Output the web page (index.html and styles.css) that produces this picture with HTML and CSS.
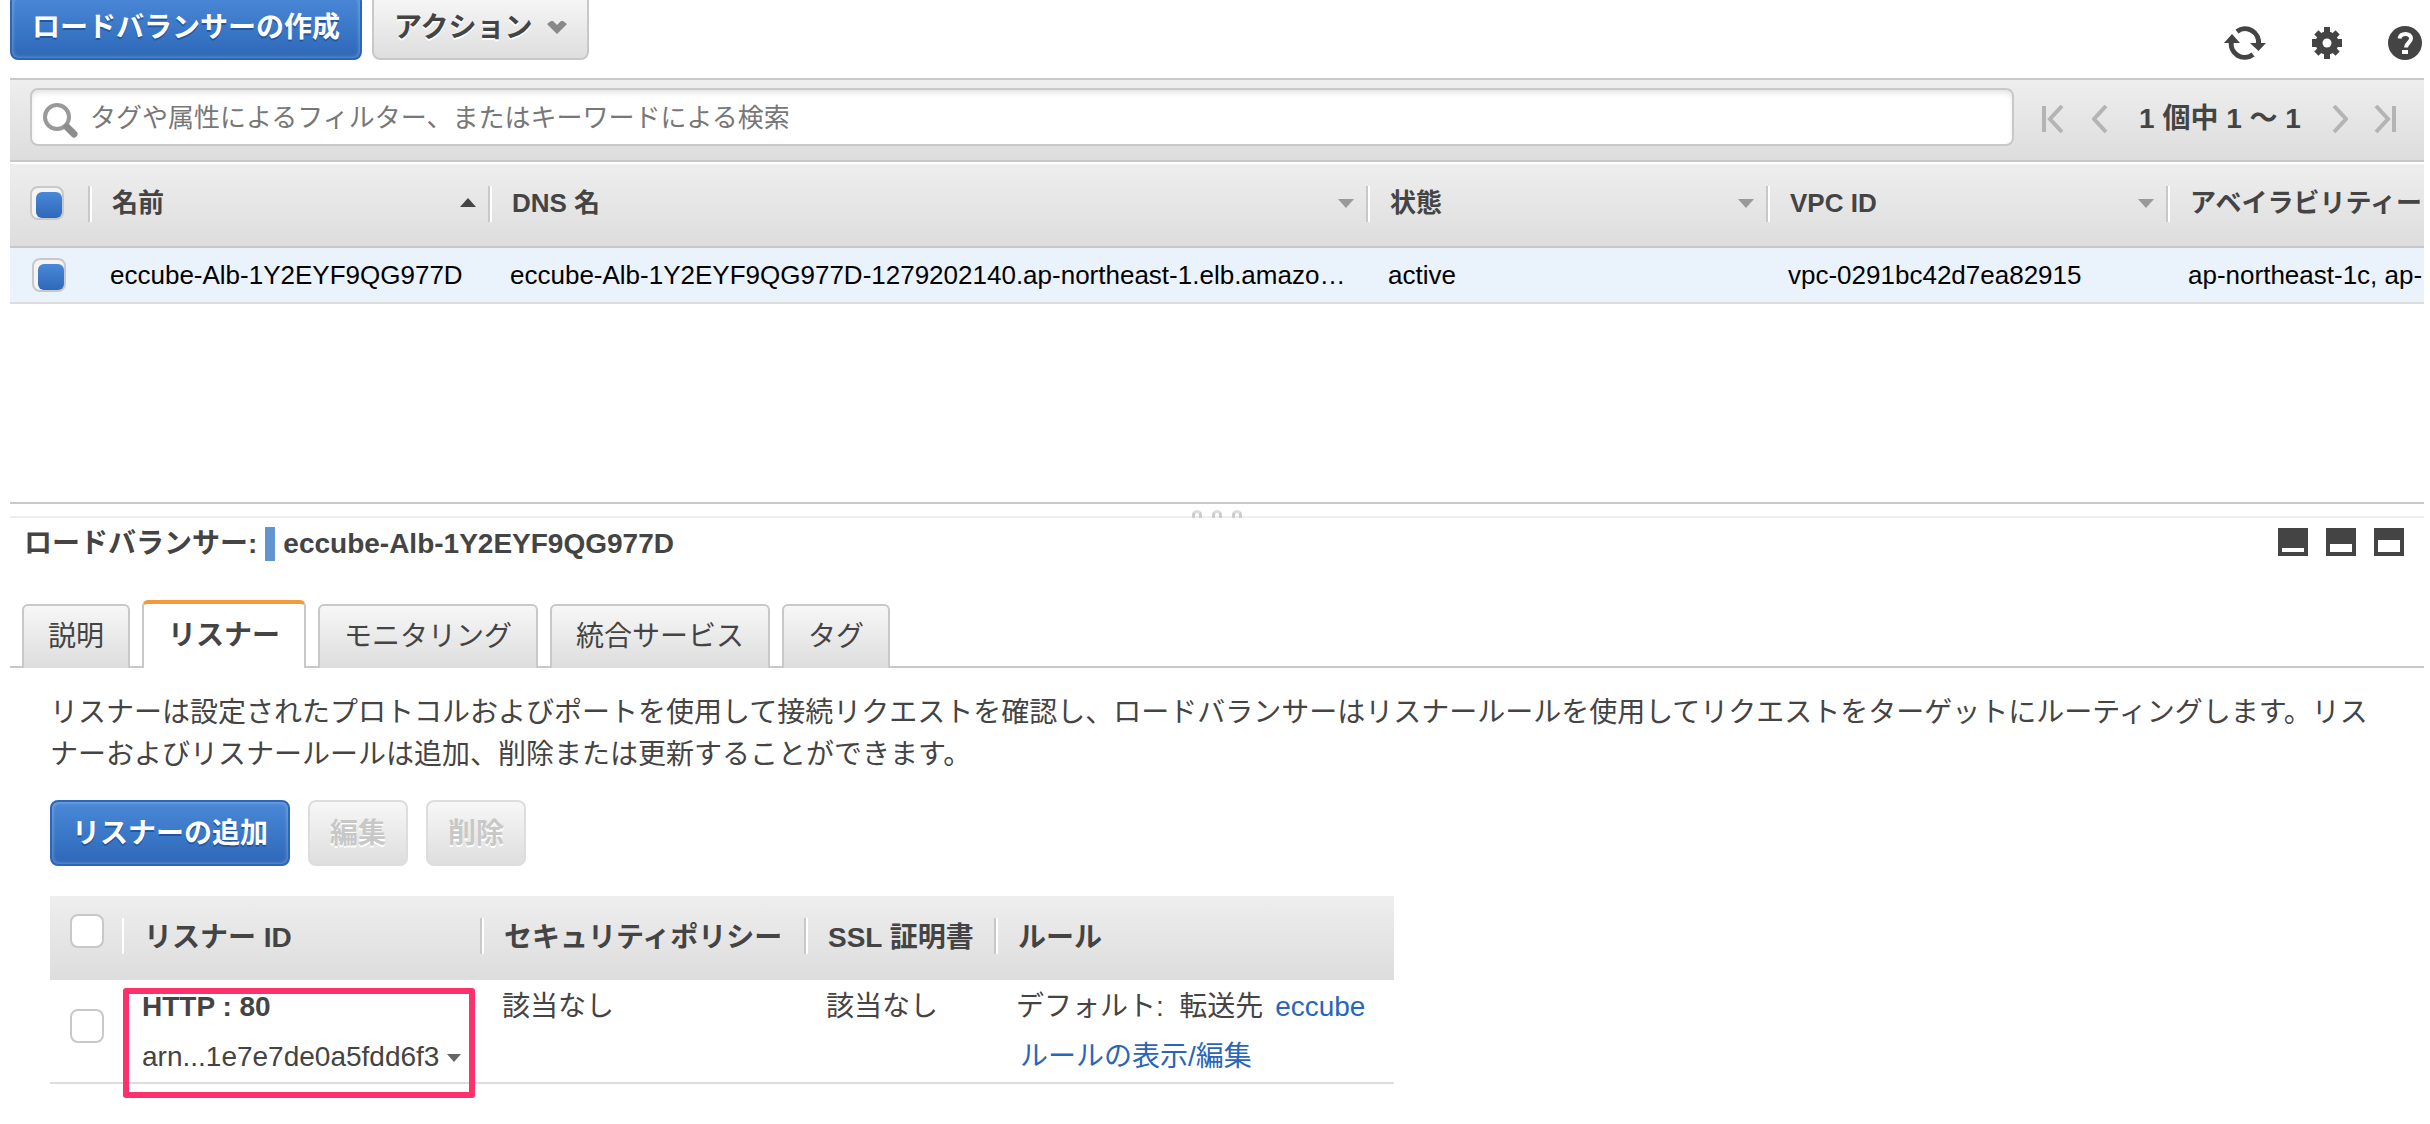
FILE: index.html
```html
<!DOCTYPE html>
<html lang="ja">
<head>
<meta charset="utf-8">
<title>ロードバランサー</title>
<link rel="stylesheet" href="styles.css">
</head>
<body>
<main class="console">
  <header class="toolbar">
    <div class="button-group">
      <button class="btn btn-primary" type="button">ロードバランサーの作成</button>
      <button class="btn" type="button">アクション
        <svg class="btn-caret" width="20" height="14" viewBox="0 0 20 14" aria-hidden="true"><path d="M0 4l4-3h2l4 4 4-4h2l4 3-10 10z" fill="#888"/></svg>
      </button>
    </div>
    <div class="tool-icons">
      <button class="icon-btn" type="button" aria-label="更新">
        <svg width="42" height="34" viewBox="0 1 42 34"><g fill="none" stroke="#444" stroke-width="5"><path d="M13 6.500A13.500 13.500 0 0 1 34.500 19"/><path d="M29 29.500A13.500 13.500 0 0 1 7.500 16"/></g><path d="M26 18h16l-7.500 8zM0 18h16L8 9z" fill="#444"/></svg>
      </button>
      <button class="icon-btn" type="button" aria-label="設定">
        <svg width="30" height="32" viewBox="-15 -16 30 32"><g fill="#444"><circle r="11.500"/><rect x="-3" y="-16" width="6" height="32"/><rect x="-15" y="-4" width="30" height="8"/><rect x="-3" y="-15" width="6" height="30" transform="rotate(45)"/><rect x="-3" y="-15" width="6" height="30" transform="rotate(-45)"/></g><circle r="4.500" fill="#fff"/></svg>
      </button>
      <button class="icon-btn" type="button" aria-label="ヘルプ">
        <svg width="34" height="34" viewBox="0 0 34 34"><circle cx="17" cy="17" r="17" fill="#444"/><path d="M11.500 12.500c.5-3 2.500-4.500 6-4.500 3.500 0 5.500 2 5.500 4.500 0 4-5 4.500-5 9" fill="none" stroke="#fff" stroke-width="4"/><rect x="14" y="24" width="6" height="4" fill="#fff"/></svg>
      </button>
    </div>
  </header>

  <section class="list-pane">
    <div class="filter-bar">
      <label class="search">
        <svg width="36" height="36" viewBox="0 0 36 36" aria-hidden="true"><circle cx="15" cy="14" r="12" fill="none" stroke="#999" stroke-width="4"/><path d="M25 24l7 7" stroke="#8c8c8c" stroke-width="7" stroke-linecap="round"/></svg>
        <input class="search-input" type="text" aria-label="検索" placeholder="タグや属性によるフィルター、またはキーワードによる検索">
      </label>
      <nav class="pager" aria-label="ページ">
        <button class="icon-btn" type="button" aria-label="最初"><svg width="22" height="28" viewBox="0 0 22 28"><path d="M2 1v26M20 1L8 14l12 13" class="arrow"/></svg></button>
        <button class="icon-btn pager-prev" type="button" aria-label="前へ"><svg width="16" height="28" viewBox="0 0 16 28"><path d="M14 1L2 14l12 13" class="arrow"/></svg></button>
        <span class="pager-text">1 個中 1 ～ 1</span>
        <button class="icon-btn pager-next" type="button" aria-label="次へ"><svg width="16" height="28" viewBox="0 0 16 28"><path d="M2 1l12 13L2 27" class="arrow"/></svg></button>
        <button class="icon-btn" type="button" aria-label="最後"><svg width="22" height="28" viewBox="0 0 22 28"><path d="M20 1v26M2 1l12 13L2 27" class="arrow"/></svg></button>
      </nav>
    </div>
    <table class="grid">
      <colgroup><col class="c-check"><col class="c-name"><col class="c-dns"><col class="c-mid"><col class="c-mid"><col></colgroup>
      <thead>
        <tr>
          <th><input class="check" type="checkbox" checked aria-label="すべて選択"></th>
          <th><div class="head">名前<svg width="16" height="10" viewBox="0 0 16 10"><path d="M0 9h16L8 0z" fill="#444"/></svg></div></th>
          <th><div class="head">DNS 名<svg width="16" height="10" viewBox="0 0 16 10"><path d="M0 1h16L8 10z" fill="#999"/></svg></div></th>
          <th><div class="head">状態<svg width="16" height="10" viewBox="0 0 16 10"><path d="M0 1h16L8 10z" fill="#999"/></svg></div></th>
          <th><div class="head">VPC ID<svg width="16" height="10" viewBox="0 0 16 10"><path d="M0 1h16L8 10z" fill="#999"/></svg></div></th>
          <th><div class="head">アベイラビリティー</div></th>
        </tr>
      </thead>
      <tbody>
        <tr>
          <td><input class="check" type="checkbox" checked aria-label="eccube-Alb を選択"></td>
          <td>eccube-Alb-1Y2EYF9QG977D</td>
          <td>eccube-Alb-1Y2EYF9QG977D-1279202140.ap-northeast-1.elb.amazo…</td>
          <td>active</td>
          <td>vpc-0291bc42d7ea82915</td>
          <td>ap-northeast-1c, ap-</td>
        </tr>
      </tbody>
    </table>
  </section>

  <div class="splitter"><i class="dot"></i><i class="dot"></i><i class="dot"></i></div>

  <section class="detail">
    <div class="detail-head">
      <h2 class="detail-title">ロードバランサー:<span class="marker"></span>eccube-Alb-1Y2EYF9QG977D</h2>
      <div class="pane-icons">
        <button class="icon-btn" type="button" aria-label="最小化"><svg width="30" height="28" viewBox="0 0 30 28"><path d="M0 0h30v28H0z" fill="#444"/><path d="M4 20h22v4H4z" fill="#fff"/></svg></button>
        <button class="icon-btn" type="button" aria-label="半分"><svg width="30" height="28" viewBox="0 0 30 28"><path d="M0 0h30v28H0z" fill="#444"/><path d="M4 16h22v8H4z" fill="#fff"/></svg></button>
        <button class="icon-btn" type="button" aria-label="最大化"><svg width="30" height="28" viewBox="0 0 30 28"><path d="M0 0h30v28H0z" fill="#444"/><path d="M4 12h22v12H4z" fill="#fff"/></svg></button>
      </div>
    </div>
    <div class="tabs" role="tablist">
      <button class="tab" role="tab" type="button">説明</button>
      <button class="tab tab-active" role="tab" type="button" aria-selected="true">リスナー</button>
      <button class="tab" role="tab" type="button">モニタリング</button>
      <button class="tab" role="tab" type="button">統合サービス</button>
      <button class="tab" role="tab" type="button">タグ</button>
    </div>
    <div class="panel">
      <p class="intro">リスナーは設定されたプロトコルおよびポートを使用して接続リクエストを確認し、ロードバランサーはリスナールールを使用してリクエストをターゲットにルーティングします。リスナーおよびリスナールールは追加、削除または更新することができます。</p>
      <div class="actions">
        <button class="btn btn-primary" type="button">リスナーの追加</button>
        <button class="btn" type="button" disabled>編集</button>
        <button class="btn" type="button" disabled>削除</button>
      </div>
      <table class="listeners">
        <colgroup><col class="l-check"><col class="l-id"><col class="l-policy"><col class="l-cert"><col></colgroup>
        <thead>
          <tr>
            <th><input class="check" type="checkbox" aria-label="すべて選択"></th>
            <th>リスナー ID</th>
            <th>セキュリティポリシー</th>
            <th>SSL 証明書</th>
            <th>ルール</th>
          </tr>
        </thead>
        <tbody>
          <tr>
            <td class="cell-check"><input class="check" type="checkbox" aria-label="HTTP : 80 を選択"></td>
            <td><div class="listener-id"><b>HTTP : 80</b><br>arn...1e7e7de0a5fdd6f3<svg class="arn-caret" width="14" height="8" viewBox="0 0 14 8" aria-hidden="true"><path d="M0 0h14L7 8z" fill="#666"/></svg><span class="callout"></span></div></td>
            <td>該当なし</td>
            <td>該当なし</td>
            <td>デフォルト:&nbsp; 転送先 <a class="rule-link" href="#">eccube</a><br><a class="rule-link" href="#">ルールの表示/編集</a></td>
          </tr>
        </tbody>
      </table>
    </div>
  </section>
</main>
</body>
</html>
```

FILE: styles.css
```css
* { box-sizing: border-box; }

body {
  margin: 0;
  background: #fff;
  color: #444;
  font: 28px/42px "Liberation Sans", "Noto Sans CJK JP", sans-serif;
}

button, input { font: inherit; color: inherit; }
svg { display: block; flex: none; }
a { color: #2a66b8; text-decoration: none; }

.console { display: flow-root; min-height: 100vh; padding: 0 6px 0 10px; }

/* toolbar */
.toolbar {
  display: flex;
  justify-content: space-between;
  margin-top: -6px;
  padding-bottom: 18px;
}
.button-group { display: flex; gap: 10px; }

.btn {
  display: flex;
  align-items: center;
  height: 66px;
  padding: 2px 20px 0;
  border: 2px solid #c8c8c8;
  border-radius: 8px;
  background: linear-gradient(#f7f7f7, #dedede);
  font-weight: bold;
  text-shadow: 0 2px 0 #fff;
  white-space: nowrap;
}
.btn-primary {
  border-color: #2c66b8;
  background: linear-gradient(#4a88d8, #2e68b9);
  box-shadow: inset 0 0 4px rgba(255, 255, 255, .4);
  color: #fff;
  text-shadow: 0 2px 0 #2455a0;
}
.btn:disabled { border-color: #ddd; color: #c8c8c8; }
.btn-caret { margin: 0 0 2px 14px; }

.icon-btn { padding: 0; border: 0; background: none; }

.tool-icons {
  display: flex;
  align-items: center;
  gap: 46px;
  padding: 32px 2px 0 0;
}

/* list */
.list-pane { min-height: 424px; }
.filter-bar {
  display: flex;
  align-items: flex-start;
  height: 84px;
  padding: 8px 28px 0 20px;
  border: solid #c8c8c8;
  border-width: 2px 0;
  background: linear-gradient(#eee, #ddd);
}
.search {
  display: flex;
  flex: 1;
  align-items: center;
  height: 58px;
  padding-left: 10px;
  border: 2px solid #c8c8c8;
  border-radius: 8px;
  background: #fff;
  box-shadow: inset 0 4px 6px -2px #ddd;
}
.search svg { margin-top: 8px; }
.search-input {
  flex: 1;
  padding: 2px 12px 0;
  border: 0;
  outline: 0;
  background: none;
  font-size: 26px;
}
.search-input::placeholder { color: #777; opacity: 1; }

.pager {
  display: flex;
  align-items: center;
  height: 62px;
  padding-left: 28px;
}
.pager-prev { margin-left: 28px; }
.pager-text { width: 224px; text-align: center; font-weight: bold; }
.pager-next { margin-right: 26px; }
.arrow { fill: none; stroke: #b4b4b4; stroke-width: 4; }

table { border-collapse: separate; border-spacing: 0; table-layout: fixed; }
th, td { padding: 0; text-align: left; white-space: nowrap; overflow: hidden; }
th + th {
  background: linear-gradient(to right, #c8c8c8 50%, #fff 50%) 0 22px / 4px 36px no-repeat;
}

.grid { width: 100%; font-size: 26px; border-top: 2px solid #fff; }
.grid thead { background: linear-gradient(#eee, #ddd); }
.grid th { height: 84px; padding: 0 0 4px 24px; border-bottom: 2px solid #c8c8c8; }
.grid td {
  height: 56px;
  padding-left: 22px;
  border-bottom: 2px solid #ddd;
  background: #eaf2fc;
  color: #000;
}
.grid th:first-child { padding-left: 20px; }
.head { display: flex; align-items: center; justify-content: space-between; padding-right: 12px; }
.c-check { width: 78px; }
.c-name { width: 400px; }
.c-dns { width: 878px; }
.c-mid { width: 400px; }

.check {
  appearance: none;
  display: block;
  width: 34px;
  height: 34px;
  margin: 0;
  border: 2px solid #c8c8c8;
  border-radius: 8px;
  background: #fff;
}
.check:checked { padding: 4px 0 0 4px; background: #f4f4f4; }
.check:checked::before {
  content: "";
  display: block;
  height: 26px;
  border-radius: 6px;
  background: linear-gradient(#4a88d8, #2e68b9);
}

/* splitter */
.splitter {
  display: flex;
  justify-content: center;
  gap: 10px;
  height: 16px;
  padding-top: 6px;
  border-top: 2px solid #c8c8c8;
  border-bottom: 2px solid #eee;
}
.dot {
  width: 10px;
  height: 8px;
  border: 3px solid #ccc;
  border-top-color: #ddd;
  border-bottom: 0;
  border-radius: 5px 5px 0 0;
}

/* detail */
.detail-head {
  display: flex;
  justify-content: space-between;
  align-items: center;
  height: 52px;
  padding: 0 20px 0 14px;
}
.detail-title { display: flex; align-items: center; margin: 0; font-size: 28px; }
.marker { width: 10px; height: 34px; margin: 0 8px; background: #6294cf; }
.pane-icons { display: flex; gap: 18px; padding-bottom: 4px; }

.tabs {
  display: flex;
  align-items: flex-end;
  gap: 12px;
  height: 98px;
  padding-left: 12px;
  border-bottom: 2px solid #c8c8c8;
}
.tab {
  height: 64px;
  margin-bottom: -2px;
  padding: 0 24px;
  border: 2px solid #c8c8c8;
  border-bottom: 0;
  border-radius: 6px 6px 0 0;
  background: linear-gradient(#f7f7f7, #ddd);
}
.tab-active {
  height: 68px;
  border-top: 4px solid #f29b38;
  background: #fff;
  font-weight: bold;
}

.panel { padding: 24px 40px 40px; }
.intro { margin: 0 0 24px; }
.actions { display: flex; gap: 18px; margin-bottom: 30px; }

.listeners { width: 1344px; max-width: 100%; }
.listeners thead { background: linear-gradient(#eee, #ddd); }
.listeners th {
  height: 84px;
  padding: 4px 0 0 24px;
  border-bottom: 4px double #ddd;
}
.listeners th:first-child { padding: 0 0 10px 20px; }
.listeners th:nth-child(2) { background-image: linear-gradient(to right, transparent 50%, #fff 50%); }
.listeners td {
  height: 104px;
  padding: 2px 0 0 22px;
  border-bottom: 2px solid #ddd;
  line-height: 50px;
  vertical-align: top;
  overflow: visible;
}
.listeners .cell-check { padding: 0 0 10px 20px; vertical-align: middle; }
.rule-link { padding-left: 4px; }
.l-check { width: 70px; }
.l-id { width: 360px; }
.l-policy { width: 324px; }
.l-cert { width: 190px; }

.listener-id { position: relative; }
.arn-caret { display: inline-block; margin: 0 0 4px 8px; }
.callout {
  position: absolute;
  inset: 6px 5px -16px -19px;
  border: 6px solid #ff316b;
  border-radius: 3px;
}
```
